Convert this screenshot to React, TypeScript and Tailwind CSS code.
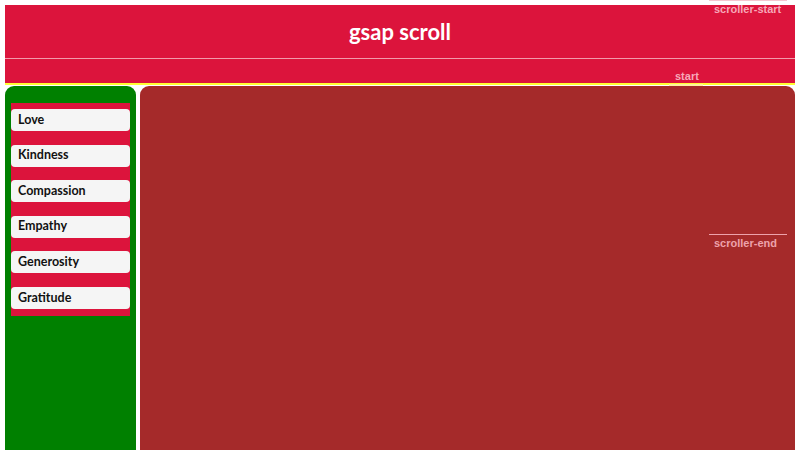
import React from "react";

const items = ["Love", "Kindness", "Compassion", "Empathy", "Generosity", "Gratitude"];

export default function App() {
  return (
    <div className="relative h-[450px] w-[800px] overflow-hidden bg-white p-[5px] pb-0 font-['Lato',sans-serif]">
      <div className="flex h-full flex-col">
        <header className="border-b-2 border-[#ffff33] bg-[#dc143c]">
          <div className="flex h-[54px] items-center justify-center border-b border-[#f29aab]">
            <h1 className="text-[22px] font-bold leading-none text-white">gsap scroll</h1>
          </div>
          <div className="h-[24px]" />
        </header>
        <div className="mt-px flex flex-1 gap-[4px]">
          <aside className="w-[131px] rounded-t-[9px] bg-[#008000] px-[6px] pt-[17px]">
            <ul className="flex flex-col gap-[13.6px] bg-[#dc143c] pb-[7px] pt-[6px]">
              {items.map((t) => (
                <li
                  key={t}
                  className="flex h-[22px] items-center rounded-[4px] bg-[#f5f5f5] px-[7px] text-[12.5px] font-bold text-[#111]"
                >
                  {t}
                </li>
              ))}
            </ul>
          </aside>
          <main className="flex-1 rounded-t-[9px] bg-[#a52a2a]" />
        </div>
      </div>

      {/* gsap markers */}
      <div className="absolute left-[709px] top-0 w-[78px] border-t border-[#f5c6d0] px-[5px] pt-[2px] font-['Liberation_Sans',sans-serif] text-[11px] font-bold leading-[12px] text-[#f7a8b8]">
        scroller-start
      </div>
      <div className="absolute left-[669px] top-[70px] w-[34px] border-b-2 border-[#fff3a0] px-[6px] pb-[2px] font-['Liberation_Sans',sans-serif] text-[11px] font-bold leading-[12px] text-[#f7a8b8]">
        start
      </div>
      <div className="absolute left-[709px] top-[234px] w-[78px] border-t border-[#eda2ab] px-[5px] pt-[2px] font-['Liberation_Sans',sans-serif] text-[11px] font-bold leading-[12px] text-[#eda2ab]">
        scroller-end
      </div>
    </div>
  );
}
